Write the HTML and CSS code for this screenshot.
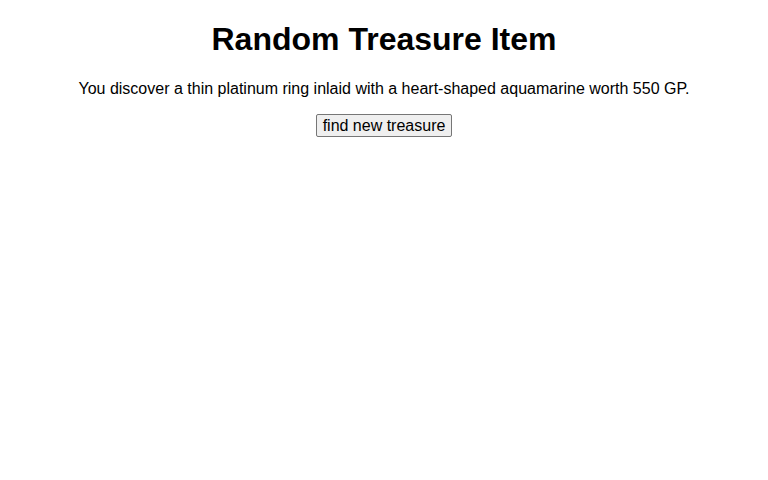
FILE: index.html
```html
<!DOCTYPE html>
<html lang="en">
<head>
    <meta charset="UTF-8">
    <meta name="viewport" content="width=device-width, initial-scale=1.0">
    <link rel="stylesheet" href="styles.css">
    <title>Random Treasure Item</title>
</head>
<body>
    <div class="treasure">
        <h1 class="treasure-title">Random Treasure Item</h1>
        <p class="treasure-text" id="treasureText">You discover a thin platinum ring inlaid with a heart-shaped aquamarine worth 550 GP.</p>
        <button class="treasure-button" id="newTreasure">find new treasure</button>
    </div>
</body>
</html>
```

FILE: styles.css
```css
body {
    margin: 0 8px;
    font-family: 'Liberation Sans', Arial, sans-serif;
    color: #000;
    background-color: #fff;
}

.treasure {
    text-align: center;
}

.treasure-title {
    font-size: 32px;
    font-weight: 700;
    margin: 21.44px 0;
}

.treasure-text {
    font-size: 16px;
    margin: 16px 0;
}

.treasure-button {
    font-family: 'Liberation Sans', Arial, sans-serif;
    font-size: 16px;
    line-height: 19px;
    color: #000;
    background-color: #efefef;
    border: 1px solid #767676;
    border-radius: 2px;
    padding: 1px 6px;
    cursor: pointer;
}

.treasure-button:hover {
    background-color: #e5e5e5;
}
```
